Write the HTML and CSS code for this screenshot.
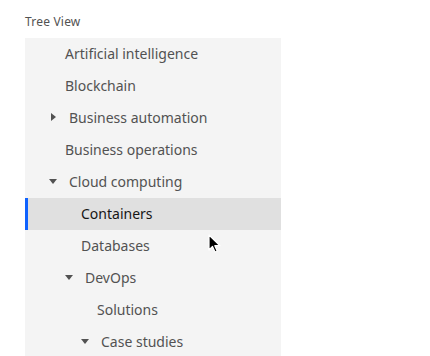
FILE: index.html
```html
<!DOCTYPE html>
<html>
<head>
<meta charset="utf-8">
<link rel="stylesheet" href="styles.css">
</head>
<body>
<div class="wrap">
  <div class="label">Tree View</div>
  <ul class="tree">
    <li class="node leaf d0">Artificial intelligence</li>
    <li class="node leaf d0">Blockchain</li>
    <li class="node parent d0"><svg class="caret right" viewBox="0 0 16 16"><path d="M6 4l5 4-5 4z"/></svg>Business automation</li>
    <li class="node leaf d0">Business operations</li>
    <li class="node parent d0"><svg class="caret" viewBox="0 0 16 16"><path d="M4 6h8l-4 5z"/></svg>Cloud computing</li>
    <li class="node leaf d1 selected">Containers</li>
    <li class="node leaf d1">Databases</li>
    <li class="node parent d1"><svg class="caret" viewBox="0 0 16 16"><path d="M4 6h8l-4 5z"/></svg>DevOps</li>
    <li class="node leaf d2">Solutions</li>
    <li class="node parent d2"><svg class="caret" viewBox="0 0 16 16"><path d="M4 6h8l-4 5z"/></svg>Case studies</li>
  </ul>
  <svg class="cursor" viewBox="0 0 14 20" width="14" height="20"><path d="M1 1v15l3.5-3.5 2.5 5.5 2.2-1-2.4-5.3H12z" fill="#000" stroke="#fff" stroke-width="1.2" stroke-linejoin="round"/></svg>
</div>
</body>
</html>
```
FILE: styles.css
```css
html, body {
  margin: 0;
  padding: 0;
  background: #ffffff;
}
body {
  font-family: "Noto Sans", "Liberation Sans", sans-serif;
  width: 430px;
  height: 356px;
  overflow: hidden;
}
.wrap {
  position: relative;
  padding: 14px 0 0 25px;
}
.label {
  font-size: 12px;
  line-height: 16px;
  color: #525252;
  letter-spacing: 0.2px;
  margin-bottom: 8px;
}
.tree {
  list-style: none;
  margin: 0;
  padding: 0;
  width: 256px;
  background: #f4f4f4;
}
.node {
  height: 32px;
  display: flex;
  align-items: center;
  font-size: 14px;
  color: #525252;
  box-sizing: border-box;
  padding-bottom: 2px;
}
.leaf.d0 { padding-left: 40px; }
.leaf.d1 { padding-left: 56px; }
.leaf.d2 { padding-left: 72px; }
.parent.d0 { padding-left: 20px; }
.parent.d1 { padding-left: 36px; }
.parent.d2 { padding-left: 52px; }
.caret {
  width: 16px;
  height: 16px;
  margin-right: 8px;
  fill: #525252;
  flex: none;
}
.selected {
  background: #e0e0e0;
  color: #161616;
  box-shadow: inset 3px 0 0 #0f62fe;
}
.cursor {
  position: absolute;
  left: 208px;
  top: 234px;
}
```
